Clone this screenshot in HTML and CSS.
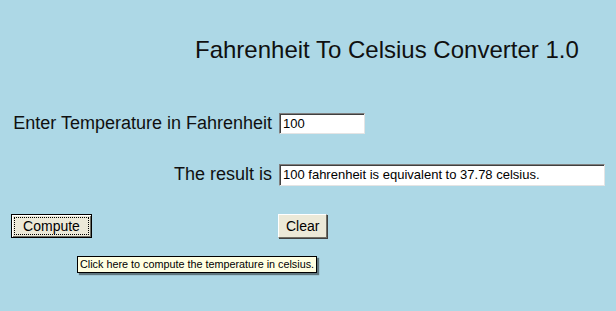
FILE: index.html
```html
<!DOCTYPE html>
<html lang="en">
<head>
    <meta charset="UTF-8">
    <title>Fahrenheit To Celsius Converter 1.0</title>
    <link rel="stylesheet" href="styles.css">
</head>
<body>
    <div class="window">
        <h1 class="title">Fahrenheit To Celsius Converter 1.0</h1>

        <div class="form">
            <label class="label" for="fahrenheit">Enter Temperature in Fahrenheit</label>
            <div class="field">
                <input id="fahrenheit" class="text-input short" value="100">
            </div>

            <label class="label" for="result">The result is</label>
            <div class="field">
                <input id="result" class="text-input wide" value="100 fahrenheit is equivalent to 37.78 celsius.">
            </div>

            <div class="left-cell">
                <button class="btn focused"><span class="focus-ring">Compute</span></button>
                <div class="tooltip">Click here to compute the temperature in celsius.</div>
            </div>
            <div class="field">
                <button class="btn">Clear</button>
            </div>
        </div>
    </div>
</body>
</html>
```

FILE: styles.css
```css
html, body {
    margin: 0;
    padding: 0;
}

body {
    background: #add8e6;
    font-family: "Liberation Sans", Arial, sans-serif;
    color: #000;
}

.window {
    width: 616px;
    height: 311px;
    overflow: hidden;
}

.title {
    margin: 0;
    padding: 36px 0 0 195px;
    font-size: 24px;
    font-weight: normal;
    line-height: 28px;
    color: #101010;
}

.form {
    display: grid;
    grid-template-columns: 261px 326px;
    grid-template-rows: 51px 51px 51px;
    column-gap: 7px;
    margin: 34px 0 0 11px;
    align-items: center;
}

.label {
    font-size: 18px;
    text-align: right;
    color: #101010;
}

.field {
    display: flex;
    align-items: center;
}

.left-cell {
    position: relative;
    display: flex;
    align-items: center;
}

.text-input {
    box-sizing: border-box;
    height: 21px;
    padding: 0 3px;
    font-family: "Liberation Sans", Arial, sans-serif;
    font-size: 13px;
    color: #000;
    background: #fff;
    border-top: 1px solid #7f7f7f;
    border-left: 1px solid #7f7f7f;
    border-right: 1px solid #e4e4e4;
    border-bottom: 1px solid #e4e4e4;
    box-shadow: inset 1px 1px 0 #404040;
    outline: none;
}

.short {
    width: 86px;
}

.wide {
    width: 326px;
    height: 22px;
}

.btn {
    box-sizing: border-box;
    height: 24px;
    padding: 0 7px;
    margin-left: -1px;
    font-family: "Liberation Sans", Arial, sans-serif;
    font-size: 14px;
    color: #000;
    background: #ece9d8;
    border-top: 1px solid #fff;
    border-left: 1px solid #fff;
    border-right: 1px solid #716f64;
    border-bottom: 1px solid #716f64;
    box-shadow: 1px 1px 0 #404040;
    cursor: pointer;
}

.btn.focused {
    width: 81px;
    padding: 2px;
    margin-left: 0;
    border: 1px solid #000;
    box-shadow: inset 1px 1px 0 #fff, inset -1px -1px 0 #716f64;
}

.focus-ring {
    display: block;
    height: 16px;
    line-height: 16px;
    border: 1px dotted #000;
}

.tooltip {
    position: absolute;
    left: 66px;
    top: 42px;
    padding: 0 2px;
    font-size: 10.8px;
    line-height: 15px;
    white-space: nowrap;
    background: #ffffe1;
    border: 1px solid #000;
    box-shadow: 2px 2px 1px rgba(0, 0, 0, 0.45);
}
```
